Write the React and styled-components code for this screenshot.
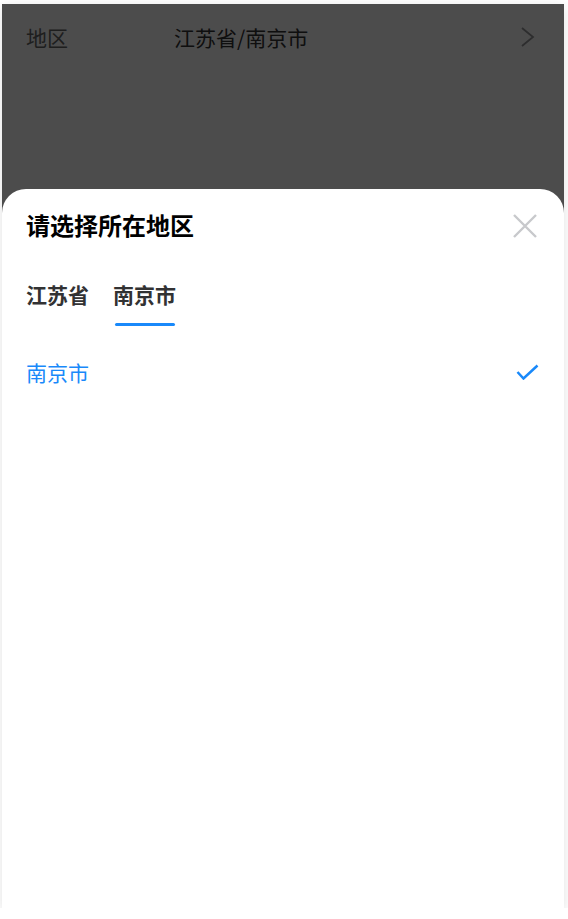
import React, { useState } from 'react';
import styled, { createGlobalStyle } from 'styled-components';

const provinces = [
  { name: '江苏省', cities: ['南京市'] },
];

function App() {
  const [activeTab, setActiveTab] = useState(1);
  const [city, setCity] = useState('南京市');
  const province = provinces[0];

  return (
    <>
      <GlobalStyle />
      <Frame>
        <FieldRow>
          <FieldLabel>地区</FieldLabel>
          <FieldValue>{province.name}/{city}</FieldValue>
          <svg width="24" height="24" viewBox="0 0 24 24">
            <path d="M6 3 L17 12 L6 21" fill="none" stroke="#969799" strokeWidth="1.8" />
          </svg>
        </FieldRow>

        <Overlay />

        <Sheet>
          <Header>
            <Title>请选择所在地区</Title>
            <CloseButton aria-label="关闭">
              <svg width="24" height="24" viewBox="0 0 24 24">
                <path d="M1 1 L23 23 M23 1 L1 23" stroke="#c8c9cc" strokeWidth="2.4" />
              </svg>
            </CloseButton>
          </Header>

          <Tabs>
            {[province.name, city].map((label, i) => (
              <Tab key={label} onClick={() => setActiveTab(i)}>
                <TabText>{label}</TabText>
                <TabLine $active={activeTab === i} />
              </Tab>
            ))}
          </Tabs>

          <Options>
            {province.cities.map((c) => (
              <Option key={c} $selected={c === city} onClick={() => setCity(c)}>
                <span>{c}</span>
                {c === city && (
                  <CheckIcon width="23" height="16" viewBox="0 0 23 16">
                    <path d="M1.5 8 L7.5 14.5 L21.5 1.5" fill="none" stroke="#1989fa" strokeWidth="2.5" />
                  </CheckIcon>
                )}
              </Option>
            ))}
          </Options>
        </Sheet>
      </Frame>
    </>
  );
}

const GlobalStyle = createGlobalStyle`
  body {
    margin: 0;
    background: #fff;
    font-family: "Noto Sans CJK SC", "Noto Sans", sans-serif;
    overflow: hidden;
  }
`;

const Frame = styled.div`
  position: relative;
  width: 562px;
  height: 904px;
  margin: 4px 0 0 2px;
  background: #fff;
  overflow: hidden;
  box-shadow: 0 3px 12px rgba(0, 0, 0, 0.12);
`;

const FieldRow = styled.div`
  display: flex;
  align-items: center;
  padding: 15px 24px;
  font-size: 21px;
  line-height: 36px;
  color: #323233;
`;

const FieldLabel = styled.div`
  width: 130px;
  margin-right: 18px;
  color: #646566;
`;

const FieldValue = styled.div`
  flex: 1;
`;

const Overlay = styled.div`
  position: absolute;
  inset: 0;
  background: rgba(0, 0, 0, 0.7);
`;

const Sheet = styled.div`
  position: absolute;
  left: 0;
  right: 0;
  bottom: 0;
  height: 719px;
  background: #fff;
  border-radius: 24px 24px 0 0;
`;

const Header = styled.div`
  display: flex;
  align-items: center;
  justify-content: space-between;
  height: 72px;
  padding: 0 24px;
`;

const Title = styled.h2`
  margin: 0;
  font-size: 24px;
  font-weight: 700;
  line-height: 36px;
  color: #000;
`;

const CloseButton = styled.button`
  display: flex;
  padding: 0;
  margin: 2px 3px 0 0;
  border: none;
  background: none;
`;

const Tabs = styled.div`
  display: flex;
  gap: 24px;
  height: 72px;
  padding: 0 24px;
`;

const Tab = styled.div`
  display: flex;
  flex-direction: column;
  align-items: center;
  padding-top: 18px;
  cursor: pointer;
`;

const TabText = styled.span`
  font-size: 21px;
  font-weight: 700;
  line-height: 30px;
  color: #323233;
`;

const TabLine = styled.div`
  width: 60px;
  height: 3px;
  margin-top: 14px;
  border-radius: 3px;
  background: ${(p) => (p.$active ? '#1989fa' : 'transparent')};
`;

const Options = styled.div`
  padding-top: 9px;
`;

const Option = styled.div`
  display: flex;
  align-items: center;
  justify-content: space-between;
  padding: 15px 24px;
  font-size: 21px;
  line-height: 30px;
  color: ${(p) => (p.$selected ? '#1989fa' : '#323233')};
  cursor: pointer;
`;

const CheckIcon = styled.svg`
  margin-right: 1px;
`;

export default App;
